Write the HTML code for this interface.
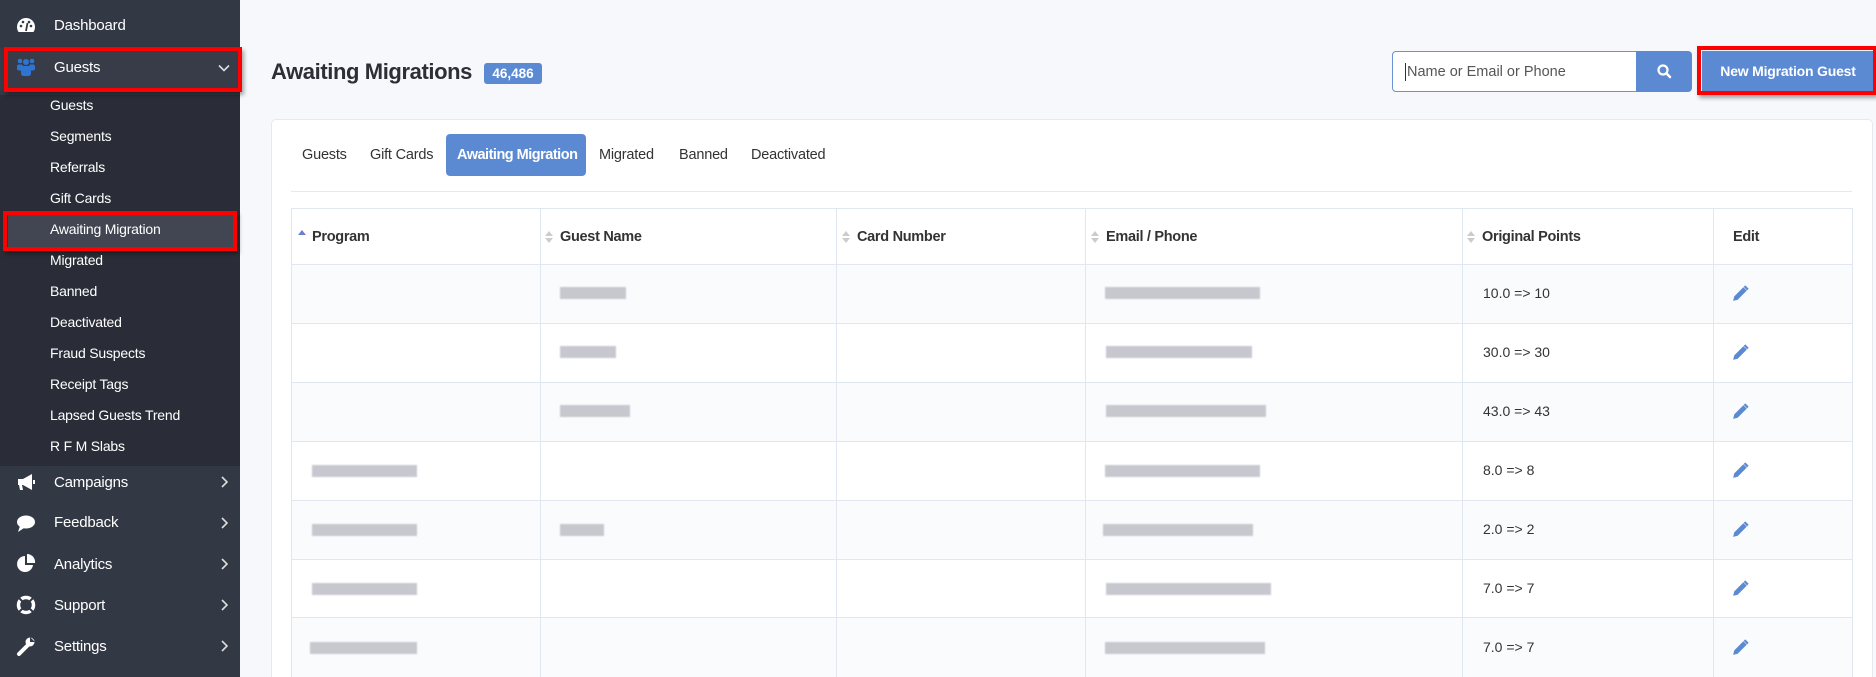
<!DOCTYPE html>
<html style="overflow:hidden;height:677px"><head><meta charset="utf-8"><style>
*{margin:0;padding:0;box-sizing:border-box}
body{width:1876px;height:677px;overflow:hidden;background:#f7f8fb;font-family:"Liberation Sans",sans-serif;position:relative}
.a{position:absolute}
#sb{left:0;top:0;width:240px;height:677px;background:#333845}
#sub{left:0;top:95px;width:240px;height:371px;background:#2a2d37}
.si{position:absolute;left:54px;color:#fff;font-size:15px;line-height:20px;letter-spacing:-.2px}
.ss{position:absolute;left:50px;color:#fff;font-size:14px;line-height:20px;letter-spacing:-.2px}
.ic{position:absolute;left:16px;width:20px;height:20px}
.chev{position:absolute;left:218px;width:12px;height:12px}
.red{position:absolute;border:4px solid #f00;box-shadow:2px 3px 4px rgba(0,0,0,.35)}
.tab{position:absolute;top:147px;font-size:14.5px;color:#333;letter-spacing:-.2px}
.vl{position:absolute;top:208px;width:1px;height:469px;background:#e1e7f1}
.hl{position:absolute;left:291px;width:1561px;height:1px;background:#e1e7f1}
.th{position:absolute;top:229px;font-size:14.5px;font-weight:bold;color:#333;letter-spacing:-.3px}
.sort{position:absolute;top:230px;width:8px;height:14px}
.bl{position:absolute;height:12px;background:#c2c2ca;filter:blur(.9px);opacity:.9}
.pt{position:absolute;left:1483px;font-size:14px;color:#333}
.pen{position:absolute;left:1732px;width:17px;height:17px}
</style></head><body>
<div id="sb" class="a"></div>
<div id="sub" class="a"></div>
<div class="a" style="left:0;top:48px;width:240px;height:42px;background:#383c48"></div>
<div class="a" style="left:8px;top:215px;width:226px;height:32px;background:#424652"></div>

<svg class="ic" style="top:16px" viewBox="0 0 20 20"><path d="M10 2A9 9 0 0 0 1 11c0 2 .6 3.7 1.6 5h14.8c1-1.3 1.6-3 1.6-5A9 9 0 0 0 10 2z" fill="#fff"/><circle cx="5" cy="10" r="1.3" fill="#333845"/><circle cx="7" cy="6" r="1.3" fill="#333845"/><circle cx="13" cy="6" r="1.3" fill="#333845"/><circle cx="15" cy="10" r="1.3" fill="#333845"/><path d="M10 15L11.5 7" stroke="#333845" stroke-width="1.8"/></svg>
<div class="si" style="top:16px">Dashboard</div>
<svg class="ic" style="top:57px" viewBox="0 0 20 20" fill="#2f74d0"><circle cx="4" cy="4" r="2.3"/><circle cx="16" cy="4" r="2.3"/><circle cx="10" cy="5" r="3"/><rect x="1" y="7.5" width="6" height="6" rx="2"/><rect x="13" y="7.5" width="6" height="6" rx="2"/><rect x="5" y="9" width="10" height="10" rx="2.5"/></svg>
<div class="si" style="top:58px">Guests</div>
<svg class="chev" style="top:62px" viewBox="0 0 12 12"><path d="M1 3.5l5 5 5-5" fill="none" stroke="#ddd" stroke-width="1.6"/></svg>
<div class="red" style="left:4px;top:47px;width:238px;height:45px"></div>

<div class="ss" style="top:95px">Guests</div>
<div class="ss" style="top:126px">Segments</div>
<div class="ss" style="top:157px">Referrals</div>
<div class="ss" style="top:188px">Gift Cards</div>
<div class="ss" style="top:219px">Awaiting Migration</div>
<div class="red" style="left:3px;top:211px;width:234px;height:40px"></div>
<div class="ss" style="top:250px">Migrated</div>
<div class="ss" style="top:281px">Banned</div>
<div class="ss" style="top:312px">Deactivated</div>
<div class="ss" style="top:343px">Fraud Suspects</div>
<div class="ss" style="top:374px">Receipt Tags</div>
<div class="ss" style="top:405px">Lapsed Guests Trend</div>
<div class="ss" style="top:436px">R F M Slabs</div>

<svg class="ic" style="top:472px" viewBox="0 0 20 20" fill="#fff"><path d="M2 7h5l9-5v16l-9-5H6l1 5H4l-1-5H2z"/><path d="M17 8h2v4h-2z"/></svg>
<div class="si" style="top:473px">Campaigns</div>
<svg class="chev" style="top:476px" viewBox="0 0 12 12"><path d="M4 1l5 5-5 5" fill="none" stroke="#ddd" stroke-width="1.6"/></svg>
<svg class="ic" style="top:513px" viewBox="0 0 20 20" fill="#fff"><ellipse cx="10" cy="9" rx="9" ry="6.5"/><path d="M4 13L2 19l6-4z"/></svg>
<div class="si" style="top:513px">Feedback</div>
<svg class="chev" style="top:517px" viewBox="0 0 12 12"><path d="M4 1l5 5-5 5" fill="none" stroke="#ddd" stroke-width="1.6"/></svg>
<svg class="ic" style="top:554px" viewBox="0 0 20 20" fill="#fff"><path d="M9 2a8 8 0 1 0 8 9H9z"/><path d="M11 0v9h8a8 8 0 0 0-8-9z"/></svg>
<div class="si" style="top:555px">Analytics</div>
<svg class="chev" style="top:558px" viewBox="0 0 12 12"><path d="M4 1l5 5-5 5" fill="none" stroke="#ddd" stroke-width="1.6"/></svg>
<svg class="ic" style="top:595px" viewBox="0 0 20 20"><circle cx="10" cy="10" r="7.5" fill="none" stroke="#fff" stroke-width="3.5"/><path d="M3 3l4 4M17 3l-4 4M3 17l4-4M17 17l-4-4" stroke="#333845" stroke-width="2"/></svg>
<div class="si" style="top:596px">Support</div>
<svg class="chev" style="top:599px" viewBox="0 0 12 12"><path d="M4 1l5 5-5 5" fill="none" stroke="#ddd" stroke-width="1.6"/></svg>
<svg class="ic" style="top:636px" viewBox="0 0 20 20"><path d="M3 18l9-9" stroke="#fff" stroke-width="4" stroke-linecap="round"/><circle cx="14" cy="6" r="4.5" fill="#fff"/><path d="M14 1v5h5" fill="#333845"/></svg>
<div class="si" style="top:637px">Settings</div>
<svg class="chev" style="top:640px" viewBox="0 0 12 12"><path d="M4 1l5 5-5 5" fill="none" stroke="#ddd" stroke-width="1.6"/></svg>

<div class="a" style="left:271px;top:59px;font-size:22px;font-weight:bold;color:#2c2f36;letter-spacing:-.4px">Awaiting Migrations</div>
<div class="a" style="left:484px;top:63px;width:58px;height:21px;background:#5b8ad2;border-radius:3px;color:#fff;font-size:13.5px;font-weight:bold;text-align:center;line-height:21px">46,486</div>

<div class="a" style="left:1392px;top:51px;width:246px;height:41px;border:1px solid #6a92d4;border-radius:4px 0 0 4px;background:#fff"></div>
<div class="a" style="left:1405px;top:63px;font-size:14.5px;color:#555;border-left:1px solid #333;padding-left:1px;line-height:18px">Name or Email or Phone</div>
<div class="a" style="left:1636px;top:51px;width:56px;height:41px;background:#5b8ad2;border-radius:0 4px 4px 0"></div>
<svg class="a" style="left:1656px;top:63px" width="16" height="16" viewBox="0 0 16 16"><circle cx="7" cy="7" r="4.5" fill="none" stroke="#fff" stroke-width="2.2"/><path d="M10.5 10.5l3.5 3.5" stroke="#fff" stroke-width="2.5" stroke-linecap="round"/></svg>
<div class="a" style="left:1702px;top:51px;width:172px;height:40px;background:#5b8ad2;color:#fff;font-size:14px;font-weight:bold;text-align:center;line-height:40px;letter-spacing:-.2px">New Migration Guest</div>
<div class="red" style="left:1697px;top:46px;width:179px;height:49px;border-right-width:3px"></div>

<div class="a" style="left:271px;top:119px;width:1602px;height:558px;background:#fff;border:1px solid #e5e9f0;border-bottom:none;border-radius:5px 5px 0 0"></div>
<div class="a" style="left:446px;top:134px;width:140px;height:42px;background:#5b8ad2;border-radius:4px"></div>
<div class="tab" style="left:302px">Guests</div>
<div class="tab" style="left:370px">Gift Cards</div>
<div class="tab" style="left:457px;color:#fff;font-weight:bold;letter-spacing:-.5px">Awaiting Migration</div>
<div class="tab" style="left:599px">Migrated</div>
<div class="tab" style="left:679px">Banned</div>
<div class="tab" style="left:751px">Deactivated</div>
<div class="a" style="left:291px;top:191px;width:1561px;height:1px;background:#e4e8ef"></div>

<div class="a" style="left:291px;top:264px;width:1561px;height:59px;background:#f9fbfd"></div>
<div class="a" style="left:291px;top:382px;width:1561px;height:59px;background:#f9fbfd"></div>
<div class="a" style="left:291px;top:500px;width:1561px;height:59px;background:#f9fbfd"></div>
<div class="a" style="left:291px;top:617px;width:1561px;height:60px;background:#f9fbfd"></div>
<div class="hl" style="top:208px"></div>
<div class="hl" style="top:264px"></div>
<div class="hl" style="top:323px"></div>
<div class="hl" style="top:382px"></div>
<div class="hl" style="top:441px"></div>
<div class="hl" style="top:500px"></div>
<div class="hl" style="top:559px"></div>
<div class="hl" style="top:617px"></div>
<div class="vl" style="left:291px"></div>
<div class="vl" style="left:540px"></div>
<div class="vl" style="left:836px"></div>
<div class="vl" style="left:1085px"></div>
<div class="vl" style="left:1462px"></div>
<div class="vl" style="left:1713px"></div>
<div class="vl" style="left:1852px"></div>

<svg class="sort" style="left:298px;top:229px" viewBox="0 0 8 14"><path d="M0 6L4 1l4 5z" fill="#6f7fd0"/></svg>
<div class="th" style="left:312px">Program</div>
<svg class="sort" style="left:545px" viewBox="0 0 8 14"><path d="M0 6L4 1l4 5zM0 8l4 5 4-5z" fill="#ccc"/></svg>
<div class="th" style="left:560px">Guest Name</div>
<svg class="sort" style="left:842px" viewBox="0 0 8 14"><path d="M0 6L4 1l4 5zM0 8l4 5 4-5z" fill="#ccc"/></svg>
<div class="th" style="left:857px">Card Number</div>
<svg class="sort" style="left:1091px" viewBox="0 0 8 14"><path d="M0 6L4 1l4 5zM0 8l4 5 4-5z" fill="#ccc"/></svg>
<div class="th" style="left:1106px">Email / Phone</div>
<svg class="sort" style="left:1467px" viewBox="0 0 8 14"><path d="M0 6L4 1l4 5zM0 8l4 5 4-5z" fill="#ccc"/></svg>
<div class="th" style="left:1482px">Original Points</div>
<div class="th" style="left:1733px">Edit</div>

<div class="bl" style="left:560px;top:287px;width:66px"></div>
<div class="bl" style="left:1105px;top:287px;width:155px"></div>
<div class="bl" style="left:560px;top:346px;width:56px"></div>
<div class="bl" style="left:1106px;top:346px;width:146px"></div>
<div class="bl" style="left:560px;top:405px;width:70px"></div>
<div class="bl" style="left:1106px;top:405px;width:160px"></div>
<div class="bl" style="left:312px;top:465px;width:105px"></div>
<div class="bl" style="left:1105px;top:465px;width:155px"></div>
<div class="bl" style="left:312px;top:524px;width:105px"></div>
<div class="bl" style="left:560px;top:524px;width:44px"></div>
<div class="bl" style="left:1103px;top:524px;width:150px"></div>
<div class="bl" style="left:312px;top:583px;width:105px"></div>
<div class="bl" style="left:1106px;top:583px;width:165px"></div>
<div class="bl" style="left:310px;top:642px;width:107px"></div>
<div class="bl" style="left:1105px;top:642px;width:160px"></div>

<div class="pt" style="top:285px">10.0 =&gt; 10</div>
<div class="pt" style="top:344px">30.0 =&gt; 30</div>
<div class="pt" style="top:403px">43.0 =&gt; 43</div>
<div class="pt" style="top:462px">8.0 =&gt; 8</div>
<div class="pt" style="top:521px">2.0 =&gt; 2</div>
<div class="pt" style="top:580px">7.0 =&gt; 7</div>
<div class="pt" style="top:639px">7.0 =&gt; 7</div>

<svg class="pen" style="top:285px" viewBox="0 0 15 15"><path d="M1 14l1-4 8-8 3 3-8 8z" fill="#5b8ad2"/><path d="M11 1l3 3" stroke="#5b8ad2" stroke-width="2"/></svg>
<svg class="pen" style="top:344px" viewBox="0 0 15 15"><path d="M1 14l1-4 8-8 3 3-8 8z" fill="#5b8ad2"/><path d="M11 1l3 3" stroke="#5b8ad2" stroke-width="2"/></svg>
<svg class="pen" style="top:403px" viewBox="0 0 15 15"><path d="M1 14l1-4 8-8 3 3-8 8z" fill="#5b8ad2"/><path d="M11 1l3 3" stroke="#5b8ad2" stroke-width="2"/></svg>
<svg class="pen" style="top:462px" viewBox="0 0 15 15"><path d="M1 14l1-4 8-8 3 3-8 8z" fill="#5b8ad2"/><path d="M11 1l3 3" stroke="#5b8ad2" stroke-width="2"/></svg>
<svg class="pen" style="top:521px" viewBox="0 0 15 15"><path d="M1 14l1-4 8-8 3 3-8 8z" fill="#5b8ad2"/><path d="M11 1l3 3" stroke="#5b8ad2" stroke-width="2"/></svg>
<svg class="pen" style="top:580px" viewBox="0 0 15 15"><path d="M1 14l1-4 8-8 3 3-8 8z" fill="#5b8ad2"/><path d="M11 1l3 3" stroke="#5b8ad2" stroke-width="2"/></svg>
<svg class="pen" style="top:639px" viewBox="0 0 15 15"><path d="M1 14l1-4 8-8 3 3-8 8z" fill="#5b8ad2"/><path d="M11 1l3 3" stroke="#5b8ad2" stroke-width="2"/></svg>
</body></html>
